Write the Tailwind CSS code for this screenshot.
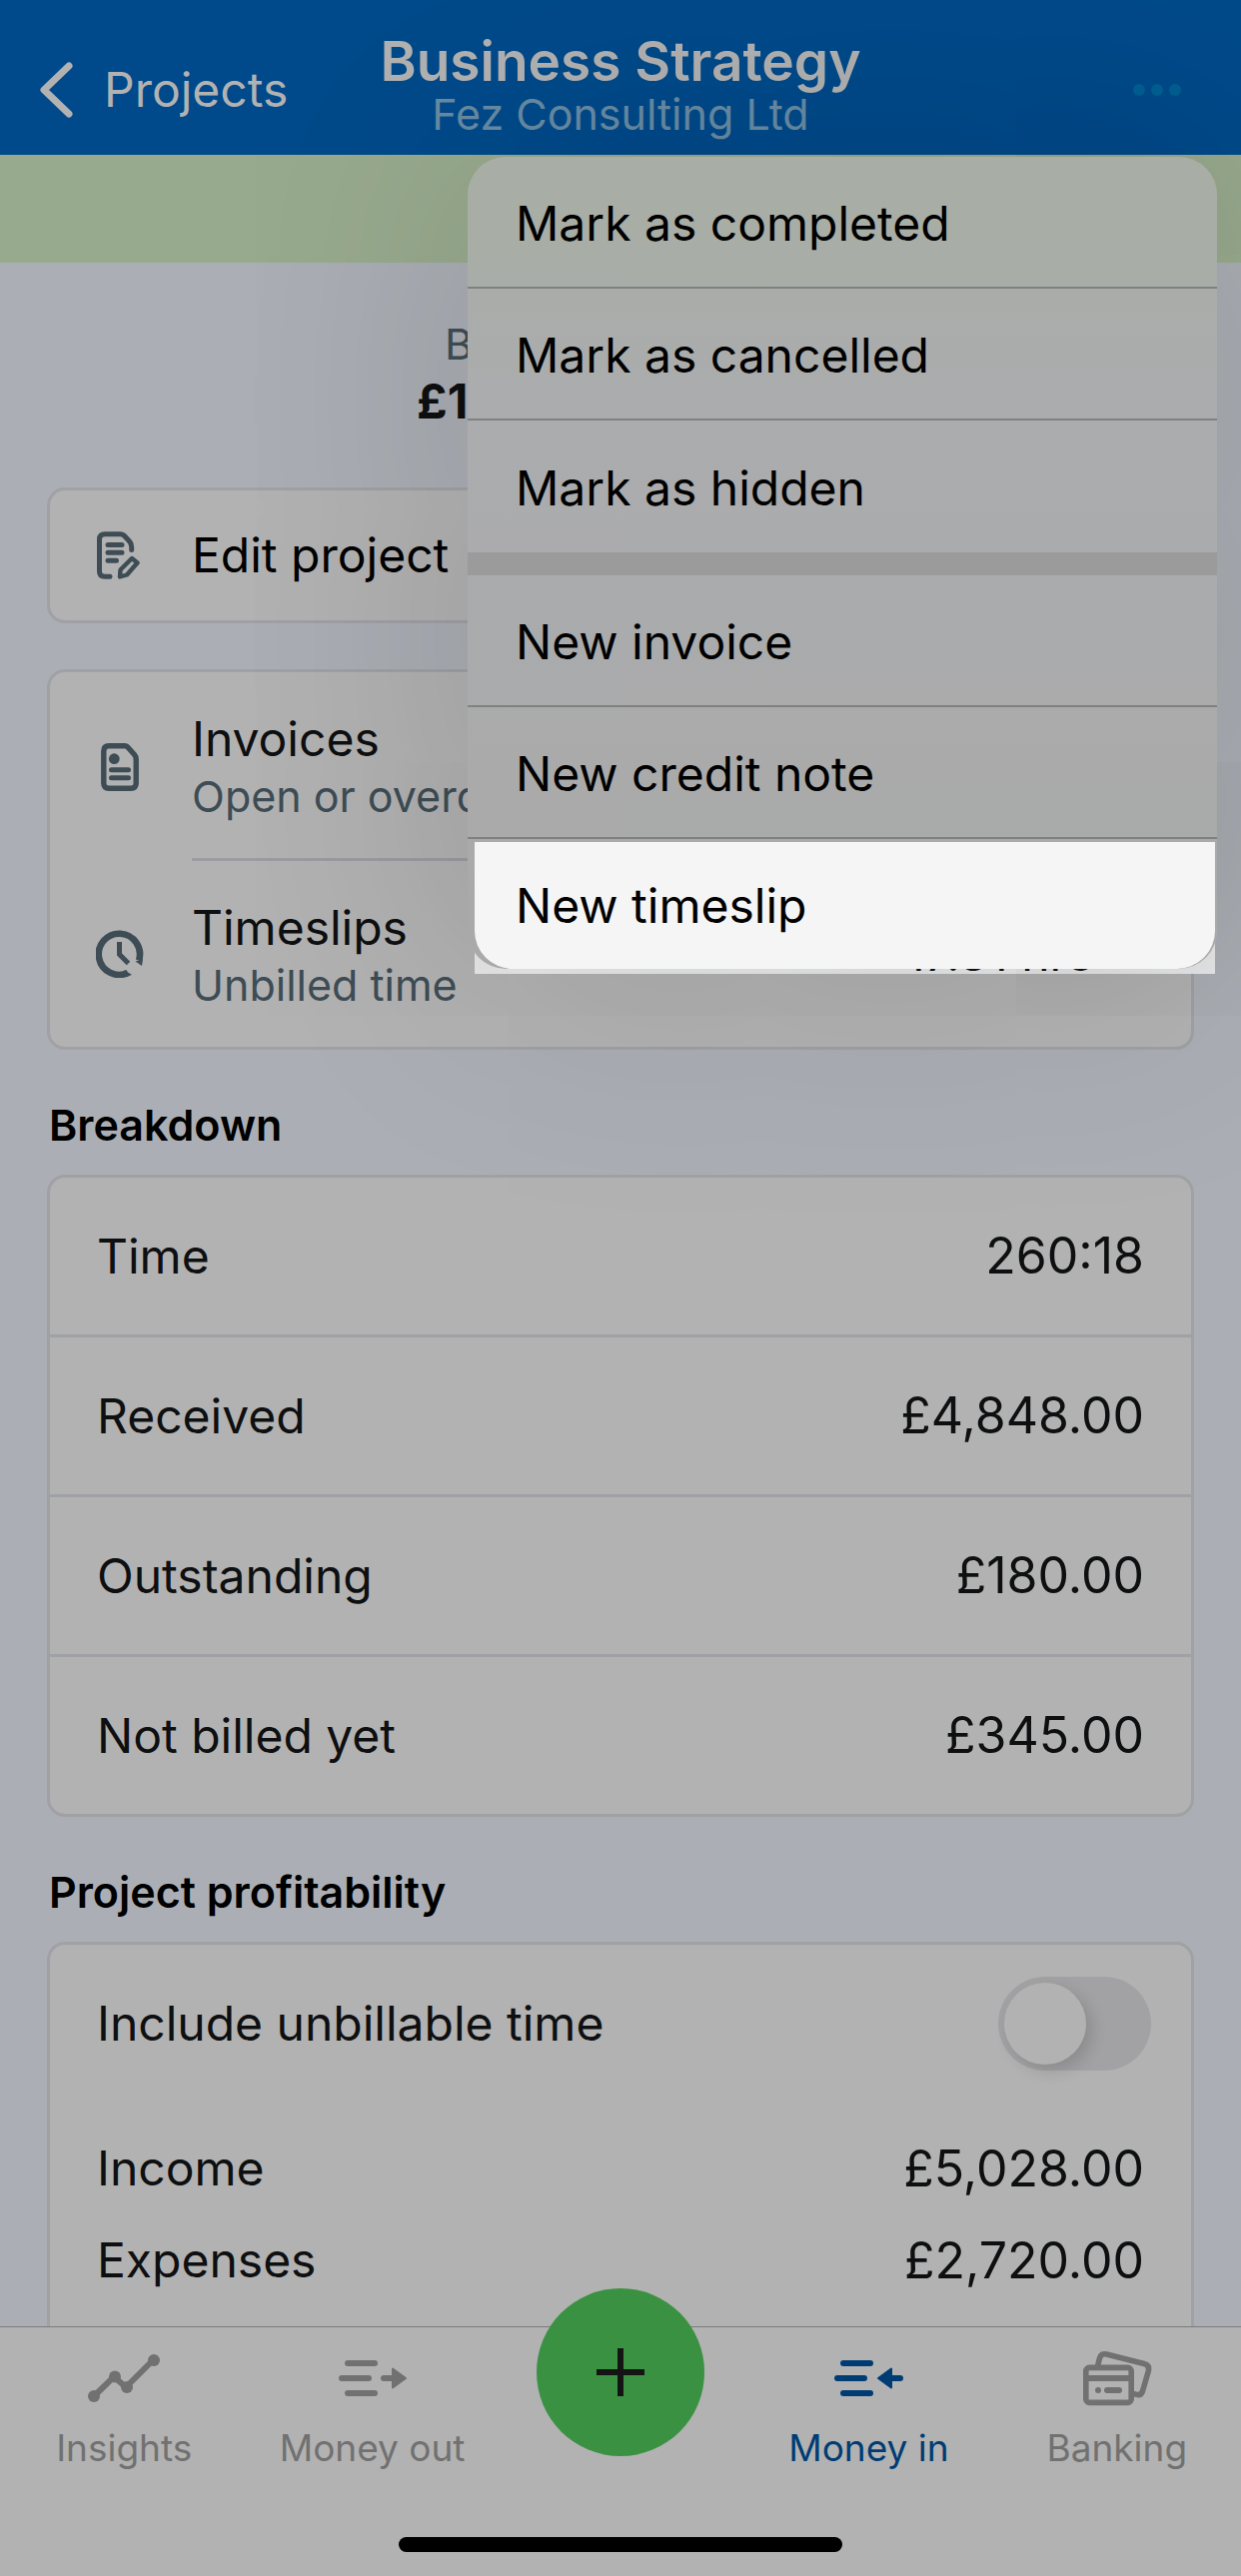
<!DOCTYPE html>
<html lang="en">
<head>
    <meta charset="UTF-8">
    <meta name="viewport" content="width=device-width, initial-scale=1.0">
    <title>Business Strategy - Projects</title>
    <script src="https://cdn.jsdelivr.net/npm/@tailwindcss/browser@4"></script>
</head>
<body class="bg-[#abafb5] font-['Inter',sans-serif] text-[48px] text-[#0e0f10]">
    <div class="relative flex flex-col h-screen overflow-hidden">

        <!-- Header -->
        <header class="grid grid-cols-[1fr_auto_1fr] items-center h-[155px] shrink-0 pt-6 px-10 bg-[#004a8b] text-[#b2b2b2]">
            <a href="#" class="flex items-center gap-[30px] justify-self-start">
                <svg class="w-[34px] h-[58px]" viewBox="0 0 34 58" fill="none" stroke="currentColor" stroke-width="7" stroke-linecap="round" stroke-linejoin="round"><path d="M29 5 L4 29 L29 53"/></svg>
                <span class="leading-[60px]">Projects</span>
            </a>
            <div class="text-center mb-2">
                <h1 class="text-[55px] leading-[56px] font-semibold">Business Strategy</h1>
                <p class="text-[43px] leading-[50px] text-[#688ca5]">Fez Consulting Ltd</p>
            </div>
            <button type="button" aria-label="More actions" class="justify-self-end mr-5 text-[#005f94]">
                <svg class="w-12 h-3" viewBox="0 0 48 12" fill="currentColor"><circle cx="6" cy="6" r="6"/><circle cx="24" cy="6" r="6"/><circle cx="42" cy="6" r="6"/></svg>
            </button>
        </header>

        <main class="flex-1 min-h-0 overflow-hidden">
            <div class="h-[108px] bg-[#98aa8e]"></div>

            <div class="pt-14 pl-[417px] h-[225px]">
                <p class="pl-7 text-[43px] leading-[50px] text-[#3f4e55]">B</p>
                <p class="leading-[66px] font-bold">£1</p>
            </div>

            <!-- Project links -->
            <section class="mx-[47px] bg-[#b2b2b2] border-3 border-[#9fa1a5] rounded-[18px]">
                <a href="#" class="flex items-center gap-12 h-[130px] px-[46px] text-black">
                    <svg class="w-12 h-12 text-[#3e4d55]" viewBox="0 0 48 48" fill="none" stroke="currentColor" stroke-width="5" stroke-linecap="round" stroke-linejoin="round">
                        <path d="M14 45.3 H9 Q3.5 45.3 3.5 40 V8 Q3.5 2.7 9 2.7 H24 Q27 2.7 29 5 L34 10.5 Q35.7 13 35.7 16 V18.5"/>
                        <path d="M12 13.5 H26 M12 21.3 H26 M12 29.3 H20.5"/>
                        <path d="M24 45.5 L24.5 38.5 L36 27 L41.5 31.5 L31 43.5 Z" stroke-width="4.4"/>
                    </svg>
                    <span>Edit project</span>
                </a>
            </section>

            <section class="mx-[47px] mt-[46px] bg-[#b2b2b2] border-3 border-[#9fa1a5] rounded-[18px]">
                <a href="#" class="flex items-center gap-12 pl-[46px]">
                    <svg class="w-12 h-12 text-[#3e4d55]" viewBox="0 0 48 48" fill="none" stroke="currentColor" stroke-width="5.4" stroke-linecap="round" stroke-linejoin="round">
                        <path d="M13 2.8 H29 Q31 2.8 32.7 5 L38.5 11.5 Q40.2 13.5 40.2 16 V40 Q40.2 45.2 35 45.2 H13 Q7.8 45.2 7.8 40 V8 Q7.8 2.8 13 2.8 Z"/>
                        <circle cx="18.3" cy="15.7" r="5.4" fill="currentColor" stroke="none"/>
                        <path d="M15.5 26.7 H32.5 M15.5 34.7 H32.5" stroke-width="5"/>
                    </svg>
                    <span class="flex-1 pt-[35px] pb-[37px] border-b-3 border-[#9b9ca0]">
                        <span class="block leading-[64px]">Invoices</span>
                        <span class="block text-[43px] leading-[50px] text-[#3e4d55]">Open or overdue</span>
                    </span>
                </a>
                <a href="#" class="flex items-center gap-12 pl-[46px] pr-[54px]">
                    <svg class="w-12 h-12 text-[#3e4d55]" viewBox="0 0 48 48" fill="none" stroke="currentColor" stroke-width="6.6">
                        <path d="M43 30.5 A20.6 20.6 0 1 0 32 43"/>
                        <path d="M47 29 L46 36 L39.5 31.5 Z M28.5 40 L36 45 L30 47 Z" fill="currentColor" stroke="none"/>
                        <path d="M23.5 12 V24.5 L32.5 33.5" stroke-width="5"/>
                    </svg>
                    <span class="flex-1 pt-[35px] pb-[37px]">
                        <span class="block leading-[64px]">Timeslips</span>
                        <span class="block text-[43px] leading-[50px] text-[#3e4d55]">Unbilled time</span>
                    </span>
                    <span class="relative z-20 flex items-center gap-7">
                        <span class="leading-[50px]">17.31 hrs</span>
                        <svg class="w-4 h-7" viewBox="0 0 16 28" fill="none" stroke="#7c8a91" stroke-width="4" stroke-linecap="round" stroke-linejoin="round"><path d="M3 3 L13 14 L3 25"/></svg>
                    </span>
                </a>
            </section>

            <h2 class="mx-[49px] mt-[50px] mb-[25px] text-[43px] leading-[50px] font-semibold text-black">Breakdown</h2>
            <dl class="mx-[47px] bg-[#b2b2b2] border-3 border-[#9fa1a5] rounded-[18px] divide-y-3 divide-[#9fa1a5] leading-[157px]">
                <div class="flex justify-between px-[47px]"><dt>Time</dt><dd class="text-[50px]">260:18</dd></div>
                <div class="flex justify-between px-[47px]"><dt>Received</dt><dd class="text-[50px]">£4,848.00</dd></div>
                <div class="flex justify-between px-[47px]"><dt>Outstanding</dt><dd class="text-[50px]">£180.00</dd></div>
                <div class="flex justify-between px-[47px]"><dt>Not billed yet</dt><dd class="text-[50px]">£345.00</dd></div>
            </dl>

            <h2 class="mx-[49px] mt-[50px] mb-[25px] text-[43px] leading-[50px] font-semibold text-black">Project profitability</h2>
            <section class="mx-[47px] bg-[#b2b2b2] border-3 border-[#9fa1a5] rounded-[18px]">
                <label class="flex items-center justify-between h-[158px] pl-[47px] pr-10">
                    <span>Include unbillable time</span>
                    <input type="checkbox" role="switch" class="appearance-none w-[153px] h-[94px] p-[6px] rounded-full bg-[#a2a2a4] before:block before:size-[82px] before:rounded-full before:bg-[#b2b2b2] before:shadow-[6px_6px_16px_rgba(0,0,0,0.14)]">
                </label>
                <dl class="pt-5 pb-16 px-[47px] leading-[92px]">
                    <div class="flex justify-between"><dt>Income</dt><dd class="text-[50px]">£5,028.00</dd></div>
                    <div class="flex justify-between"><dt>Expenses</dt><dd class="text-[50px]">£2,720.00</dd></div>
                </dl>
            </section>
        </main>

        <!-- Tab bar -->
        <nav class="flex flex-col justify-between h-[250px] shrink-0 pb-6 border-t border-[#7b7c7f] bg-[#b2b2b2] text-[37px] leading-[44px] text-[#717171]">
            <div class="grid grid-cols-5 justify-items-center">
                <a href="#" class="flex flex-col items-center gap-6 pt-[27px]">
                    <svg class="w-[72px] h-12" viewBox="0 0 72 48" fill="currentColor"><path d="M6 42 L26 22.5 L38 33 L65 6" fill="none" stroke="currentColor" stroke-width="6"/><circle cx="6" cy="42" r="6"/><circle cx="27" cy="22.5" r="6"/><circle cx="39" cy="33" r="6"/><circle cx="66" cy="6" r="6"/></svg>
                    <span>Insights</span>
                </a>
                <a href="#" class="flex flex-col items-center gap-6 pt-[27px]">
                    <svg class="w-[72px] h-12" viewBox="0 0 72 48" fill="none" stroke="currentColor" stroke-width="6" stroke-linecap="round" stroke-linejoin="round"><path d="M11 9 H38 M5 24 H32 M11 39 H38 M47 24 H58"/><path d="M56 14.5 L69 24 L56 33.5 Z" fill="currentColor" stroke-width="2"/></svg>
                    <span>Money out</span>
                </a>
                <button type="button" aria-label="Add" class="-mt-[39px] size-[168px] flex items-center justify-center rounded-full bg-[#3b9142] text-[#141414]">
                    <svg class="size-12" viewBox="0 0 48 48" fill="none" stroke="currentColor" stroke-width="6"><path d="M24 0 V48 M0 24 H48"/></svg>
                </button>
                <a href="#" class="flex flex-col items-center gap-6 pt-[27px] text-[#003c74]">
                    <svg class="w-[72px] h-12" viewBox="0 0 72 48" fill="none" stroke="currentColor" stroke-width="6" stroke-linecap="round" stroke-linejoin="round"><path d="M11 9 H38 M5 24 H32 M11 39 H38 M57 24 H68"/><path d="M59 14.5 L46 24 L59 33.5 Z" fill="currentColor" stroke-width="2"/></svg>
                    <span>Money in</span>
                </a>
                <a href="#" class="flex flex-col items-center gap-6 pt-[27px]">
                    <svg class="w-[72px] h-12 overflow-visible" viewBox="0 0 72 48" fill="none" stroke="currentColor" stroke-width="5.6" stroke-linejoin="round"><path d="M16.5 12 L18.5 4 Q20 -1.5 25.5 0 L63 9.5 Q68.8 11 67.3 17 L61.5 37 Q60 41.5 55.5 40.4 L52 39.5"/><rect x="4.8" y="13.4" width="45.4" height="35" rx="3.5"/><path d="M4 24 H51" stroke-width="6"/><path d="M26 36 H38" stroke-width="6" stroke-linecap="round"/><circle cx="17" cy="36" r="3" fill="currentColor" stroke="none"/></svg>
                    <span>Banking</span>
                </a>
            </div>
            <div class="self-center w-[444px] h-[15px] rounded-full bg-black"></div>
        </nav>

        <!-- Spotlight behind the highlighted menu item -->
        <div class="absolute z-10 top-[842px] left-[475px] right-[26px] h-[133px] bg-[#e8e9ea]"></div>

        <!-- Actions menu -->
        <div role="menu" class="absolute z-30 top-[157px] left-[468px] right-6 flex flex-col rounded-[38px] bg-linear-to-b from-[#a8ada6] from-10% via-[#abacae] via-30% to-[#a9a9a9] text-black shadow-[0_0_300px_rgba(0,0,0,0.2)] *:h-[132px] *:pl-12 *:pt-[3px] *:text-left">
            <button type="button" role="menuitem" class="border-b-2 border-[#7f8180]">Mark as completed</button>
            <button type="button" role="menuitem" class="border-b-2 border-[#7f8180]">Mark as cancelled</button>
            <button type="button" role="menuitem">Mark as hidden</button>
            <button type="button" role="menuitem" class="border-t-[23px] border-t-[#9b9b9c] border-b-2 border-b-[#7f8180] h-[155px]!">New invoice</button>
            <button type="button" role="menuitem" class="border-b-2 border-[#7f8180]">New credit note</button>
            <div class="h-[130px]! pl-[7px]! pr-[2px]">
                <button type="button" role="menuitem" class="block w-full h-full pl-[41px] text-left bg-[#f5f5f5] rounded-b-[38px]">New timeslip</button>
            </div>
        </div>
    </div>
</body>
</html>
